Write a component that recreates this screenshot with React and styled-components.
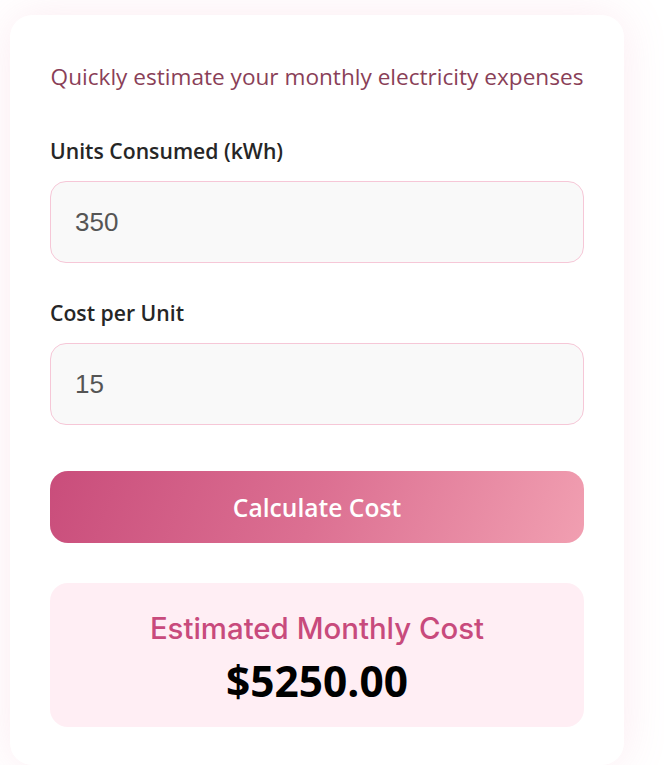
import React, { useState } from 'react'
import styled, { createGlobalStyle } from 'styled-components'

const Global = createGlobalStyle`
  body {
    margin: 0;
    background: #ffffff;
    font-family: "Open Sans", "Noto Sans", sans-serif;
  }
`

const App = () => {
  const [units, setUnits] = useState('350')
  const [rate, setRate] = useState('15')
  const [total, setTotal] = useState(5250)

  const calculate = () => {
    setTotal((parseFloat(units) || 0) * (parseFloat(rate) || 0))
  }

  return (
    <>
      <Global />
      <S.Page>
        <S.Card>
          <S.Subtitle>Quickly estimate your monthly electricity expenses</S.Subtitle>
          <S.Field>
            <S.Label>Units Consumed (kWh)</S.Label>
            <S.Input value={units} onChange={(e) => setUnits(e.target.value)} />
          </S.Field>
          <S.Field>
            <S.Label>Cost per Unit</S.Label>
            <S.Input value={rate} onChange={(e) => setRate(e.target.value)} />
          </S.Field>
          <S.Button onClick={calculate}>Calculate Cost</S.Button>
          <S.Result>
            <S.ResultTitle>Estimated Monthly Cost</S.ResultTitle>
            <S.Amount>${total.toFixed(2)}</S.Amount>
          </S.Result>
        </S.Card>
      </S.Page>
    </>
  )
}

export default App

// style

const S = {}

S.Page = styled.div`
  padding: 15px 40px 0 10px;
  min-height: 765px;
  box-sizing: border-box;
`

S.Card = styled.div`
  width: 614px;
  box-sizing: border-box;
  background: #ffffff;
  border-radius: 22px;
  padding: 40px 40px 38px;
  box-shadow: 0 0 45px rgba(236, 130, 165, 0.16);
  display: flex;
  flex-direction: column;
`

S.Subtitle = styled.p`
  margin: 0 0 46px;
  padding-top: 8px;
  text-align: center;
  font-size: 22.6px;
  color: #8a3f58;
  line-height: 28px;
  white-space: nowrap;
`

S.Field = styled.div`
  display: flex;
  flex-direction: column;
  margin-bottom: 36px;
`

S.Label = styled.label`
  font-size: 21.2px;
  font-weight: 600;
  color: #262626;
  line-height: 28px;
  margin-bottom: 16px;
`

S.Input = styled.input`
  height: 82px;
  box-sizing: border-box;
  border: 1px solid #f6c7d7;
  border-radius: 16px;
  background: #f9f9f9;
  padding: 0 24px;
  font-family: "Liberation Sans", Arial, sans-serif;
  font-size: 26px;
  color: #555555;
  outline: none;
`

S.Button = styled.button`
  margin-top: 10px;
  height: 72px;
  border: none;
  border-radius: 18px;
  background: linear-gradient(110deg, #c94d7b 0%, #dc7092 50%, #f19fb1 100%);
  color: #ffffff;
  font-family: "Open Sans", "Noto Sans", sans-serif;
  font-size: 24.6px;
  font-weight: 600;
  cursor: pointer;
`

S.Result = styled.div`
  margin-top: 40px;
  background: #ffeef4;
  border-radius: 18px;
  padding: 28px 20px 20px;
  display: flex;
  flex-direction: column;
  align-items: center;
`

S.ResultTitle = styled.h3`
  margin: 0;
  font-family: Inter, Roboto, sans-serif;
  font-size: 29.4px;
  font-weight: 500;
  color: #c84a7c;
  line-height: 36px;
`

S.Amount = styled.div`
  margin-top: 8px;
  font-family: "Open Sans", "Noto Sans", sans-serif;
  font-size: 42.4px;
  font-weight: 700;
  color: #000000;
  line-height: 52px;
`
